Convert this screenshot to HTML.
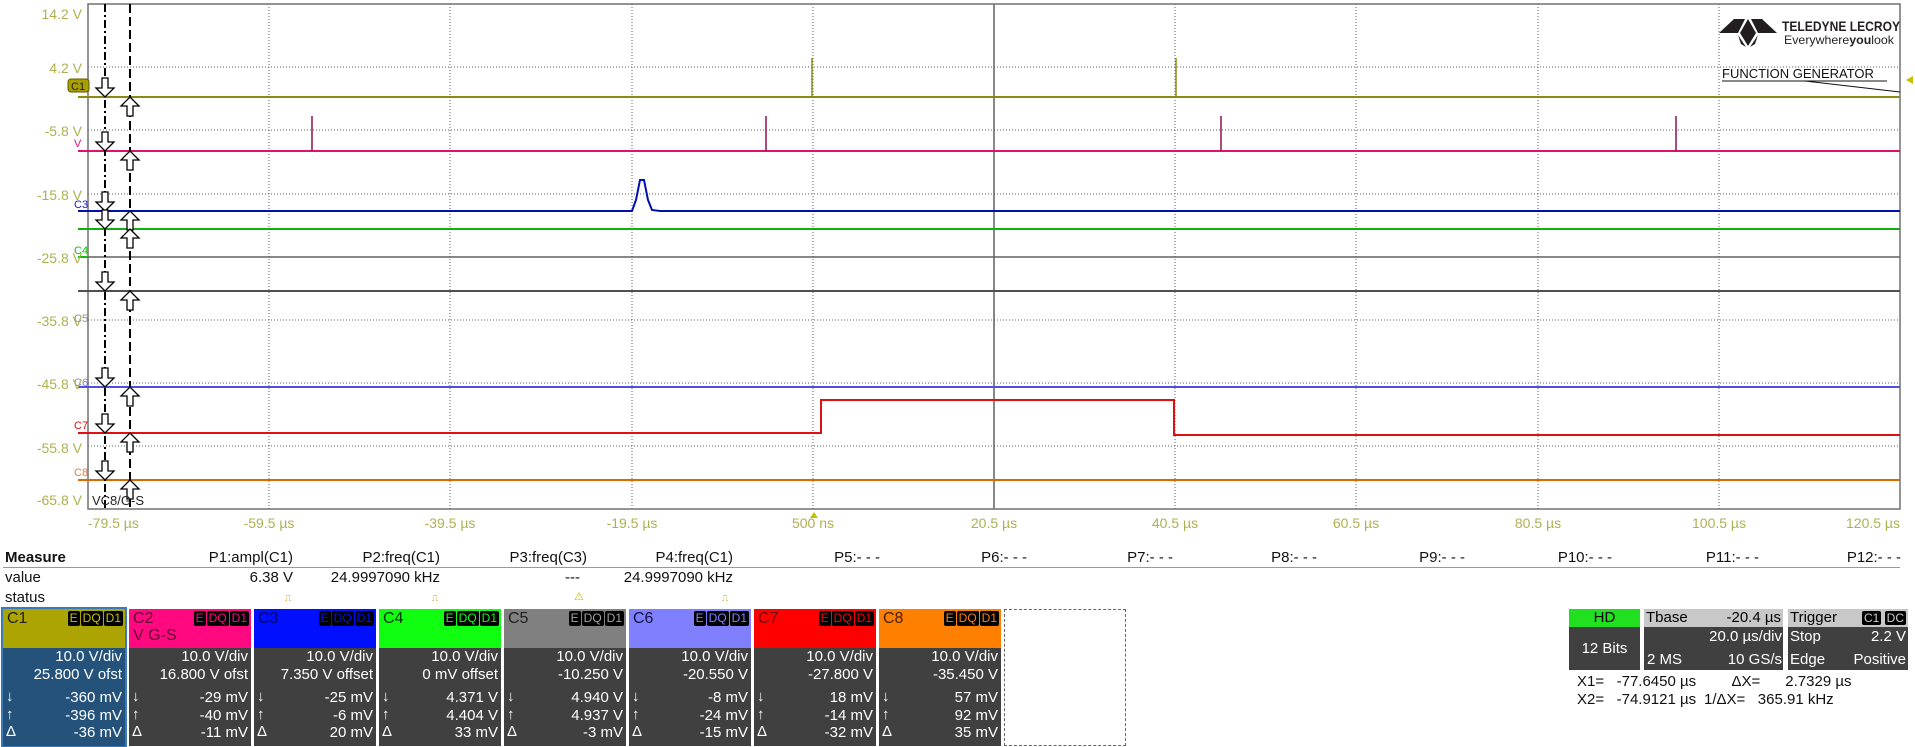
<!DOCTYPE html>
<html><head><meta charset="utf-8"><style>
*{margin:0;padding:0;box-sizing:border-box}
body{width:1915px;height:747px;background:#fff;position:relative;overflow:hidden;font-family:"Liberation Sans",sans-serif;}
.a{position:absolute;white-space:nowrap}
.m{font-size:15px;color:#111}
.box{position:absolute;top:609px;width:122px;height:137px;background:#404040}
.box .h{height:39px;position:relative;font-size:16px;padding:1px 0 0 4px;line-height:17px}
.box .t{position:absolute;top:2px;right:2px;font-size:12px;display:flex;gap:1px}
.box .t span{background:#000;border-radius:2px;padding:0 2px;line-height:15px}
.box .b{color:#fff;font-size:15px;line-height:17.5px;position:relative;height:98px}
.box .b div{text-align:right;padding-right:3px}
.box .ar{position:absolute;left:3px;top:40px;line-height:17.5px;text-align:left!important;padding:0!important}
.rp{position:absolute;color:#fff;font-size:15px}
</style></head><body>
<svg class="a" style="left:0;top:0" width="1915" height="540">
<defs>
<path id="dn" d="M-3,-18h6v10h6l-9,9l-9,-9h6z" fill="#fff" stroke="#000" stroke-width="1.3"/>
<path id="up" d="M-3,18h6v-10h6l-9,-9l-9,9h6z" fill="#fff" stroke="#000" stroke-width="1.3"/>
</defs>
<g stroke="#606060" stroke-width="1" stroke-dasharray="1,2">
<line x1="269" y1="4" x2="269" y2="509"/><line x1="450" y1="4" x2="450" y2="509"/><line x1="632" y1="4" x2="632" y2="509"/><line x1="813" y1="4" x2="813" y2="509"/>
<line x1="1175" y1="4" x2="1175" y2="509"/><line x1="1356" y1="4" x2="1356" y2="509"/><line x1="1538" y1="4" x2="1538" y2="509"/><line x1="1719" y1="4" x2="1719" y2="509"/>
<line x1="88" y1="67" x2="1900" y2="67"/><line x1="88" y1="130" x2="1900" y2="130"/><line x1="88" y1="194" x2="1900" y2="194"/>
<line x1="88" y1="320" x2="1900" y2="320"/><line x1="88" y1="383" x2="1900" y2="383"/><line x1="88" y1="446" x2="1900" y2="446"/>
</g>
<g stroke="#606060" stroke-width="1.5">
<line x1="994" y1="4" x2="994" y2="509"/><line x1="88" y1="257" x2="1900" y2="257"/>
</g>
<rect x="88" y="4" width="1812" height="505" fill="none" stroke="#707070" stroke-width="1.5"/>
<line x1="78" y1="97" x2="1900" y2="97" stroke="#8a8a10" stroke-width="2"/>
<line x1="812" y1="97" x2="812" y2="58" stroke="#8a8a10" stroke-width="1.5"/>
<line x1="1176" y1="97" x2="1176" y2="58" stroke="#8a8a10" stroke-width="1.5"/>
<line x1="78" y1="151" x2="1900" y2="151" stroke="#e0106e" stroke-width="2"/>
<g stroke="#901050" stroke-width="1.5"><line x1="312" y1="151" x2="312" y2="116"/><line x1="766" y1="151" x2="766" y2="116"/><line x1="1221" y1="151" x2="1221" y2="116"/><line x1="1676" y1="151" x2="1676" y2="116"/></g>
<path d="M78,211H632L636,200L640,180L644,180L648,200L652,210L660,211H1900" fill="none" stroke="#0010b0" stroke-width="2"/>
<line x1="78" y1="229" x2="1900" y2="229" stroke="#10b010" stroke-width="2"/>
<line x1="78" y1="257" x2="88" y2="257" stroke="#10c010" stroke-width="2"/>
<line x1="78" y1="291" x2="1900" y2="291" stroke="#505050" stroke-width="2"/>
<line x1="78" y1="387" x2="1900" y2="387" stroke="#5050e0" stroke-width="2"/>
<path d="M78,433H821V400H1174V435H1900" fill="none" stroke="#e01010" stroke-width="2"/>
<line x1="78" y1="480" x2="1900" y2="480" stroke="#d86a00" stroke-width="2"/>
<line x1="105" y1="4" x2="105" y2="509" stroke="#000" stroke-width="2" stroke-dasharray="8,3,2,3"/>
<line x1="130" y1="4" x2="130" y2="509" stroke="#000" stroke-width="2" stroke-dasharray="9,4"/>
<use href="#dn" x="105" y="96"/><use href="#dn" x="105" y="150"/><use href="#dn" x="105" y="210"/><use href="#dn" x="105" y="228"/><use href="#dn" x="105" y="290"/><use href="#dn" x="105" y="386"/><use href="#dn" x="105" y="432"/><use href="#dn" x="105" y="479"/>
<use href="#up" x="130" y="98"/><use href="#up" x="130" y="152"/><use href="#up" x="130" y="212"/><use href="#up" x="130" y="230"/><use href="#up" x="130" y="292"/><use href="#up" x="130" y="388"/><use href="#up" x="130" y="434"/><use href="#up" x="130" y="481"/>
<rect x="68" y="79" width="21" height="13" rx="3" fill="#a8a000" stroke="#605800"/>
<text x="71" y="90" font-size="11" fill="#222">C1</text>
<g font-size="11"><text x="74" y="147" fill="#e0107a">V</text><text x="74" y="208" fill="#2020c0">C3</text><text x="74" y="254" fill="#10c010">C4</text><text x="74" y="322" fill="#909090">C5</text><text x="74" y="386" fill="#8080e0">C6</text><text x="74" y="429" fill="#e01010">C7</text><text x="74" y="476" fill="#e08040">C8</text></g>
<g font-size="14" fill="#b0b050" text-anchor="end">
<text x="82" y="19">14.2 V</text><text x="82" y="73">4.2 V</text><text x="82" y="136">-5.8 V</text><text x="82" y="200">-15.8 V</text><text x="82" y="263">-25.8 V</text><text x="82" y="326">-35.8 V</text><text x="82" y="389">-45.8 V</text><text x="82" y="453">-55.8 V</text><text x="82" y="505">-65.8 V</text>
</g>
<text x="92" y="505" font-size="13" fill="#222">VC8/G-S</text>
<g font-size="14" fill="#b0b050" text-anchor="middle">
<text x="88" y="528" text-anchor="start">-79.5 µs</text><text x="269" y="528">-59.5 µs</text><text x="450" y="528">-39.5 µs</text><text x="632" y="528">-19.5 µs</text><text x="813" y="528">500 ns</text><text x="994" y="528">20.5 µs</text><text x="1175" y="528">40.5 µs</text><text x="1356" y="528">60.5 µs</text><text x="1538" y="528">80.5 µs</text><text x="1719" y="528">100.5 µs</text><text x="1900" y="528" text-anchor="end">120.5 µs</text>
</g>
<path d="M810,518l4,-6l4,6z" fill="#c8c000"/>
<path d="M1906,80l7,-4v8z" fill="#c8c000"/>
<g fill="#231f20">
<path d="M1719,33L1734,19H1745L1738,33Z"/>
<path d="M1740,33L1748,19L1756,33L1748,46Z"/>
<path d="M1758,33L1751,19H1762L1777,33Z"/>
<path d="M1738,35L1746,47L1741,44Z"/><path d="M1758,35L1750,47L1755,44Z"/>
</g>
<text x="1782" y="31" font-size="14" font-weight="bold" fill="#231f20" textLength="118" lengthAdjust="spacingAndGlyphs">TELEDYNE LECROY</text>
<text x="1784" y="44" font-size="12" fill="#231f20" textLength="110" lengthAdjust="spacingAndGlyphs">Everywhere<tspan font-weight="bold">you</tspan>look</text>
<text x="1722" y="78" font-size="13" fill="#111">FUNCTION GENERATOR</text>
<line x1="1722" y1="81" x2="1887" y2="81" stroke="#111"/>
<line x1="1805" y1="81" x2="1900" y2="92" stroke="#111"/>
</svg>

<div class="a m" style="left:5px;top:549px;font-weight:bold">Measure</div>
<div class="a" style="left:3px;top:567px;width:1897px;border-top:1px solid #999"></div>
<div class="a m" style="left:5px;top:569px">value</div>
<div class="a m" style="left:5px;top:589px">status</div>
<div class="a m" style="right:1622px;top:549px">P1:ampl(C1)</div>
<div class="a m" style="right:1475px;top:549px">P2:freq(C1)</div>
<div class="a m" style="right:1328px;top:549px">P3:freq(C3)</div>
<div class="a m" style="right:1182px;top:549px">P4:freq(C1)</div>
<div class="a m" style="right:1035px;top:549px">P5:- - -</div>
<div class="a m" style="right:888px;top:549px">P6:- - -</div>
<div class="a m" style="right:742px;top:549px">P7:- - -</div>
<div class="a m" style="right:598px;top:549px">P8:- - -</div>
<div class="a m" style="right:450px;top:549px">P9:- - -</div>
<div class="a m" style="right:303px;top:549px">P10:- - -</div>
<div class="a m" style="right:156px;top:549px">P11:- - -</div>
<div class="a m" style="right:14px;top:549px">P12:- - -</div>
<div class="a m" style="right:1622px;top:569px">6.38 V</div>
<div class="a m" style="right:1475px;top:569px">24.9997090 kHz</div>
<div class="a m" style="right:1335px;top:569px">---</div>
<div class="a m" style="right:1182px;top:569px">24.9997090 kHz</div>
<div class="a" style="left:285px;top:593px;font-size:9px;color:#b0a000">⎍</div>
<div class="a" style="left:432px;top:593px;font-size:9px;color:#b0a000">⎍</div>
<div class="a" style="left:574px;top:590px;font-size:11px;color:#d0b000">⚠</div>
<div class="a" style="left:722px;top:593px;font-size:9px;color:#b0a000">⎍</div>

<div class="box" style="left:3px;background:#24527a;outline:2px solid #3a7ab8"><div class="h" style="background:#aca400;color:#222">C1<div class="t" style="color:#c8c000"><span>E</span><span>DQ</span><span>D1</span></div></div><div class="b"><div>10.0 V/div</div><div>25.800 V ofst</div><div style="margin-top:6px">-360 mV</div><div>-396 mV</div><div>-36 mV</div><div class="ar">↓<br>↑<br>Δ</div></div></div>
<div class="box" style="left:129px"><div class="h" style="background:#ff0880;color:#600030">C2<br>V G-S<div class="t" style="color:#ff0880"><span>E</span><span>DQ</span><span>D1</span></div></div><div class="b"><div>10.0 V/div</div><div>16.800 V ofst</div><div style="margin-top:6px">-29 mV</div><div>-40 mV</div><div>-11 mV</div><div class="ar">↓<br>↑<br>Δ</div></div></div>
<div class="box" style="left:254px"><div class="h" style="background:#0010ff;color:#000070">C3<div class="t" style="color:#0010ff"><span>E</span><span>DQ</span><span>D1</span></div></div><div class="b"><div>10.0 V/div</div><div>7.350 V offset</div><div style="margin-top:6px">-25 mV</div><div>-6 mV</div><div>20 mV</div><div class="ar">↓<br>↑<br>Δ</div></div></div>
<div class="box" style="left:379px"><div class="h" style="background:#10ff10;color:#003000">C4<div class="t" style="color:#10ff10"><span>E</span><span>DQ</span><span>D1</span></div></div><div class="b"><div>10.0 V/div</div><div>0 mV offset</div><div style="margin-top:6px">4.371 V</div><div>4.404 V</div><div>33 mV</div><div class="ar">↓<br>↑<br>Δ</div></div></div>
<div class="box" style="left:504px"><div class="h" style="background:#808080;color:#202020">C5<div class="t" style="color:#a0a0a0"><span>E</span><span>DQ</span><span>D1</span></div></div><div class="b"><div>10.0 V/div</div><div>-10.250 V</div><div style="margin-top:6px">4.940 V</div><div>4.937 V</div><div>-3 mV</div><div class="ar">↓<br>↑<br>Δ</div></div></div>
<div class="box" style="left:629px"><div class="h" style="background:#8080ff;color:#101040">C6<div class="t" style="color:#8080ff"><span>E</span><span>DQ</span><span>D1</span></div></div><div class="b"><div>10.0 V/div</div><div>-20.550 V</div><div style="margin-top:6px">-8 mV</div><div>-24 mV</div><div>-15 mV</div><div class="ar">↓<br>↑<br>Δ</div></div></div>
<div class="box" style="left:754px"><div class="h" style="background:#ff0000;color:#700000">C7<div class="t" style="color:#ff0000"><span>E</span><span>DQ</span><span>D1</span></div></div><div class="b"><div>10.0 V/div</div><div>-27.800 V</div><div style="margin-top:6px">18 mV</div><div>-14 mV</div><div>-32 mV</div><div class="ar">↓<br>↑<br>Δ</div></div></div>
<div class="box" style="left:879px"><div class="h" style="background:#ff8000;color:#402000">C8<div class="t" style="color:#ff8000"><span>E</span><span>DQ</span><span>D1</span></div></div><div class="b"><div>10.0 V/div</div><div>-35.450 V</div><div style="margin-top:6px">57 mV</div><div>92 mV</div><div>35 mV</div><div class="ar">↓<br>↑<br>Δ</div></div></div>
<div class="a" style="left:1004px;top:609px;width:122px;height:137px;border:1px dashed #666"></div>

<div class="a" style="left:1569px;top:609px;width:71px;height:61px;background:#404040"></div>
<div class="a" style="left:1569px;top:609px;width:71px;height:18px;background:#20e020;text-align:center;font-size:15px;line-height:18px">HD</div>
<div class="rp" style="left:1569px;top:640px;width:71px;text-align:center">12 Bits</div>
<div class="a" style="left:1644px;top:609px;width:139px;height:61px;background:#404040"></div>
<div class="a" style="left:1644px;top:609px;width:139px;height:18px;background:#c8c8c8;font-size:15px;line-height:18px;padding:0 2px">Tbase<span style="float:right">-20.4 µs</span></div>
<div class="rp" style="right:133px;top:628px">20.0 µs/div</div>
<div class="rp" style="left:1647px;top:651px">2 MS</div>
<div class="rp" style="right:133px;top:651px">10 GS/s</div>
<div class="a" style="left:1788px;top:609px;width:120px;height:61px;background:#404040"></div>
<div class="a" style="left:1788px;top:609px;width:120px;height:18px;background:#c8c8c8;font-size:15px;line-height:18px;padding:0 2px">Trigger<span style="float:right;font-size:12px"><span style="background:#000;color:#ccc;border-radius:2px;padding:0 2px">C1</span> <span style="background:#000;color:#ccc;border-radius:2px;padding:0 2px">DC</span></span></div>
<div class="rp" style="left:1790px;top:628px">Stop</div>
<div class="rp" style="right:9px;top:628px">2.2 V</div>
<div class="rp" style="left:1790px;top:651px">Edge</div>
<div class="rp" style="right:9px;top:651px">Positive</div>
<div class="a m" style="left:1577px;top:673px">X1=&nbsp;&nbsp; -77.6450 µs</div>
<div class="a m" style="left:1577px;top:691px">X2=&nbsp;&nbsp; -74.9121 µs</div>
<div class="a m" style="left:1724px;top:673px">&nbsp; ΔX=&nbsp;&nbsp;&nbsp;&nbsp;&nbsp; 2.7329 µs</div>
<div class="a m" style="left:1704px;top:691px">1/ΔX=&nbsp;&nbsp; 365.91 kHz</div>
</body></html>
